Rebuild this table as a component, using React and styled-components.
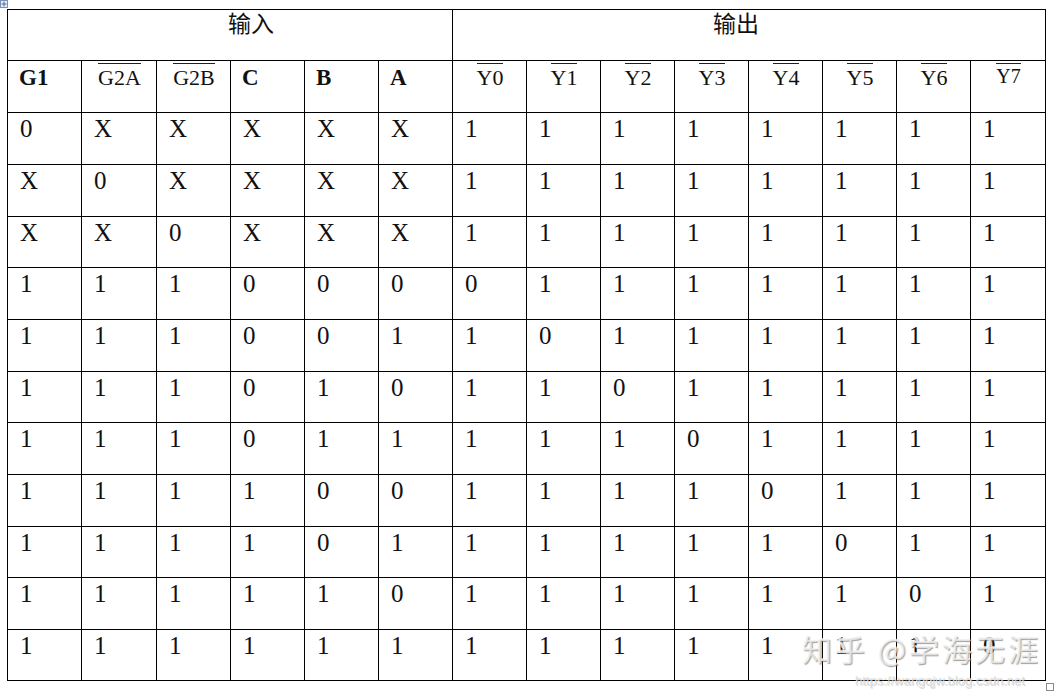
import styled, { createGlobalStyle } from "styled-components";

const Global = createGlobalStyle`
  html, body {
    margin: 0;
    background: #fff;
  }
  body {
    font-family: "Liberation Serif", "Noto Sans CJK SC", serif;
    color: #111;
  }
`;

const Page = styled.div`
  position: relative;
  width: 1064px;
  height: 698px;
  padding: 9px 0 0 7px;
  box-sizing: border-box;
  overflow: hidden;
`;

const Grid = styled.div`
  display: grid;
  width: max-content;
  grid-template-columns: 73px 74px repeat(11, 73px) 74px;
  grid-template-rows: 50px 51px 51px 51px 50px 51px 51px 50px 51px 51px 50px 51px 50px;
  gap: 1px;
  padding: 1px;
  background: #000;
`;

const Cell = styled.div`
  background: #fff;
  box-sizing: border-box;
  font-size: 25px;
  line-height: 25px;
  padding: 3px 0 0 12px;
  white-space: nowrap;
`;

const GroupCell = styled(Cell)`
  grid-column: span ${(p) => p.$span};
  font-family: "Noto Sans CJK SC", sans-serif;
  font-size: 23px;
  line-height: 23px;
  padding: 1px 0 0 ${(p) => p.$indent}px;
`;

const HeadCell = styled(Cell)`
  font-size: ${(p) => (p.$bar ? (p.$small ? 20 : 22) : 23)}px;
  line-height: ${(p) => (p.$bar ? (p.$small ? 20 : 22) : 23)}px;
  font-weight: ${(p) => (p.$bar ? 400 : 700)};
  text-align: ${(p) => (p.$bar ? "center" : "left")};
  padding: ${(p) => (p.$bar ? (p.$small ? "5px 0 0 1px" : "6px 0 0 1px") : "5px 0 0 11px")};
`;

const Bar = styled.span`
  border-top: 1px solid #222;
  padding-top: 1px;
`;

const MoveHandle = styled.div`
  position: absolute;
  left: 0;
  top: 0;
  width: 8px;
  height: 8px;
  border: 1px solid #7a93b8;
  background: #e4ecf7;
  box-sizing: border-box;
  display: flex;
  align-items: center;
  justify-content: center;
`;

const SizeHandle = styled.div`
  position: absolute;
  left: 1046px;
  top: 683px;
  width: 6px;
  height: 6px;
  border: 1px solid #8a8a8a;
  background: #fff;
`;

const Mark = styled.div`
  position: absolute;
  left: 802px;
  top: 630px;
  font-family: "Noto Sans CJK SC", sans-serif;
  font-size: 30px;
  line-height: 36px;
  letter-spacing: 3px;
  color: rgba(240, 240, 240, 0.8);
  text-shadow: 1px 1px 1px rgba(120, 120, 120, 0.7), -1px -1px 0 rgba(255, 255, 255, 0.7);
  white-space: nowrap;
`;

const Url = styled.div`
  position: absolute;
  left: 855px;
  top: 674px;
  font-family: "Liberation Sans", sans-serif;
  font-size: 13px;
  line-height: 14px;
  color: rgba(220, 220, 220, 0.9);
  text-shadow: 1px 1px 0 rgba(185, 185, 185, 0.5);
  white-space: nowrap;
`;

const heads = [
  { label: "G1" },
  { label: "G2A", bar: true },
  { label: "G2B", bar: true },
  { label: "C" },
  { label: "B" },
  { label: "A" },
  { label: "Y0", bar: true },
  { label: "Y1", bar: true },
  { label: "Y2", bar: true },
  { label: "Y3", bar: true },
  { label: "Y4", bar: true },
  { label: "Y5", bar: true },
  { label: "Y6", bar: true },
  { label: "Y7", bar: true, small: true },
];

const rows = [
  "0XXXXX11111111",
  "X0XXXX11111111",
  "XX0XXX11111111",
  "11100001111111",
  "11100110111111",
  "11101011011111",
  "11101111101111",
  "11110011110111",
  "11110111111011",
  "11111011111101",
  "11111111111110",
];

export default function App() {
  return (
    <Page>
      <Global />
      <MoveHandle>
        <svg width="6" height="6" viewBox="0 0 6 6">
          <path d="M3 0.5V5.5M0.5 3H5.5" stroke="#4a6a9a" strokeWidth="1" fill="none" />
        </svg>
      </MoveHandle>
      <Grid>
        <GroupCell $span={6} $indent={220}>输入</GroupCell>
        <GroupCell $span={8} $indent={260}>输出</GroupCell>
        {heads.map((h) => (
          <HeadCell key={h.label} $bar={h.bar} $small={h.small}>
            {h.bar ? <Bar>{h.label}</Bar> : h.label}
          </HeadCell>
        ))}
        {rows.map((r, i) =>
          r.split("").map((v, j) => <Cell key={i + "-" + j}>{v}</Cell>)
        )}
      </Grid>
      <Mark>知乎 @学海无涯</Mark>
      <Url>https://wangqjw.blog.csdn.net</Url>
      <SizeHandle />
    </Page>
  );
}
